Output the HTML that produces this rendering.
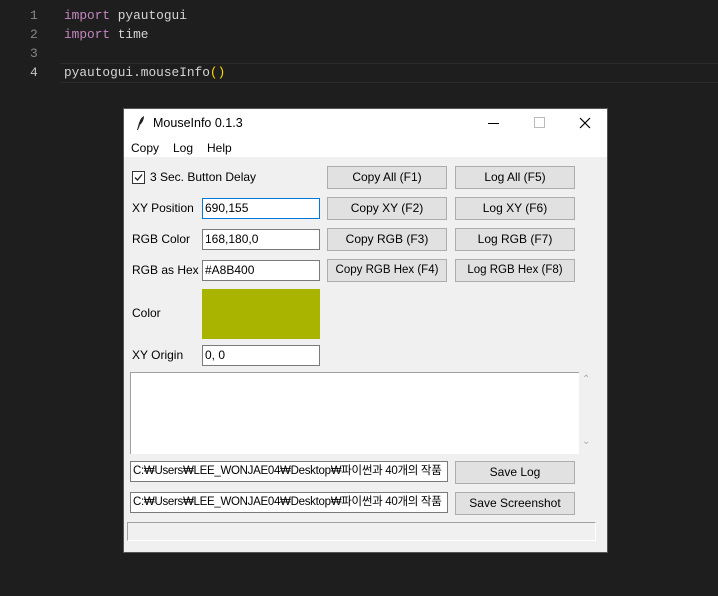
<!DOCTYPE html><html><head><style>
body{margin:0;width:718px;height:596px;background:#1e1e1e;position:relative;overflow:hidden;font-family:"Liberation Sans","Noto Sans CJK KR",sans-serif;}
.a{position:absolute;}
.code{font-family:"Liberation Mono",monospace;font-size:12.8px;color:#d4d4d4;white-space:pre;}
.ln{font-family:"Liberation Mono",monospace;font-size:13px;color:#858585;}
.k{color:#c586c0}.p{color:#ffd700}
.w{font-size:12px;color:#000;}
.in{position:absolute;background:#fff;border:1px solid #7a7a7a;box-sizing:border-box;height:21px;font-size:12px;line-height:19px;padding-left:2px;white-space:nowrap;overflow:hidden;}
.b{position:absolute;background:#e1e1e1;border:1px solid #adadad;box-sizing:border-box;height:23px;font-size:12px;line-height:21px;text-align:center;white-space:nowrap;}
</style></head><body>
<div class="a" style="left:60px;top:63px;width:658px;height:18px;border-top:1px solid #2a2a2a;border-bottom:1px solid #2a2a2a;"></div>
<div class="a ln" style="left:30px;top:8px;">1</div>
<div class="a ln" style="left:30px;top:27px;">2</div>
<div class="a ln" style="left:30px;top:46px;">3</div>
<div class="a ln" style="left:30px;top:65px;color:#c6c6c6">4</div>
<div class="a code" style="left:64px;top:8px;"><span class="k">import</span> pyautogui</div>
<div class="a code" style="left:64px;top:27px;"><span class="k">import</span> time</div>
<div class="a code" style="left:64px;top:65px;">pyautogui.mouseInfo<span class="p">()</span></div>

<div class="a" style="left:123px;top:108px;width:485px;height:445px;background:#f0f0f0;border:1px solid #555;box-sizing:border-box;"></div>
<div class="a" style="left:124px;top:109px;width:483px;height:48px;background:#fff;"></div>
<svg class="a" style="left:134px;top:115px" width="12" height="16"><path d="M3 15 L5 8 Q7 2 10 1 Q10 6 6 10 L4 15Z" fill="#222"/></svg>
<div class="a w" style="left:153px;top:116px;font-size:12.5px;">MouseInfo 0.1.3</div>
<div class="a" style="left:488px;top:123px;width:11px;height:1px;background:#000"></div>
<div class="a" style="left:534px;top:117px;width:9px;height:9px;border:1px solid #bbb"></div>
<svg class="a" style="left:579px;top:117px" width="12" height="12"><path d="M1 1L11 11M11 1L1 11" stroke="#000" stroke-width="1.2"/></svg>
<div class="a w" style="left:131px;top:141px;">Copy</div>
<div class="a w" style="left:173px;top:141px;">Log</div>
<div class="a w" style="left:207px;top:141px;">Help</div>

<div class="a" style="left:132px;top:171px;width:13px;height:13px;border:1px solid #333;box-sizing:border-box;background:#fff"></div>
<svg class="a" style="left:133px;top:172px" width="11" height="11"><path d="M2 5.5L4.5 8L9 2.5" stroke="#222" stroke-width="1.3" fill="none"/></svg>
<div class="a w" style="left:150px;top:170px;">3 Sec. Button Delay</div>
<div class="a w" style="left:132px;top:201px;">XY Position</div>
<div class="a w" style="left:132px;top:232px;">RGB Color</div>
<div class="a w" style="left:132px;top:263px;">RGB as Hex</div>
<div class="a w" style="left:132px;top:306px;">Color</div>
<div class="a w" style="left:132px;top:348px;">XY Origin</div>
<div class="in" style="left:202px;top:198px;width:118px;border-color:#0078d7">690,155</div>
<div class="in" style="left:202px;top:229px;width:118px;">168,180,0</div>
<div class="in" style="left:202px;top:260px;width:118px;">#A8B400</div>
<div class="a" style="left:202px;top:289px;width:118px;height:50px;background:#a8b400"></div>
<div class="in" style="left:202px;top:345px;width:118px;">0, 0</div>

<div class="b" style="left:327px;top:166px;width:120px;">Copy All (F1)</div>
<div class="b" style="left:455px;top:166px;width:120px;">Log All (F5)</div>
<div class="b" style="left:327px;top:197px;width:120px;">Copy XY (F2)</div>
<div class="b" style="left:455px;top:197px;width:120px;">Log XY (F6)</div>
<div class="b" style="left:327px;top:228px;width:120px;">Copy RGB (F3)</div>
<div class="b" style="left:455px;top:228px;width:120px;">Log RGB (F7)</div>
<div class="b" style="left:327px;top:259px;width:120px;font-size:11.5px">Copy RGB Hex (F4)</div>
<div class="b" style="left:455px;top:259px;width:120px;font-size:11.5px">Log RGB Hex (F8)</div>

<div class="a" style="left:130px;top:372px;width:449px;height:82px;background:#fff;border-left:1px solid #a0a0a0;border-top:1px solid #a0a0a0;box-sizing:border-box"></div>
<div class="a" style="left:582px;top:374px;font-size:10px;color:#aaa">&#8963;</div>
<div class="a" style="left:582px;top:436px;font-size:10px;color:#aaa">&#8964;</div>
<div class="in" style="left:130px;top:461px;width:318px;font-size:11.5px;letter-spacing:-0.3px">C:₩Users₩LEE_WONJAE04₩Desktop₩파이썬과 40개의 작품</div>
<div class="in" style="left:130px;top:492px;width:318px;font-size:11.5px;letter-spacing:-0.3px">C:₩Users₩LEE_WONJAE04₩Desktop₩파이썬과 40개의 작품</div>
<div class="b" style="left:455px;top:461px;width:120px;">Save Log</div>
<div class="b" style="left:455px;top:492px;width:120px;">Save Screenshot</div>
<div class="a" style="left:127px;top:522px;width:469px;height:19px;border:1px solid #a0a0a0;border-right-color:#fff;border-bottom-color:#fff;box-sizing:border-box"></div>
</body></html>
